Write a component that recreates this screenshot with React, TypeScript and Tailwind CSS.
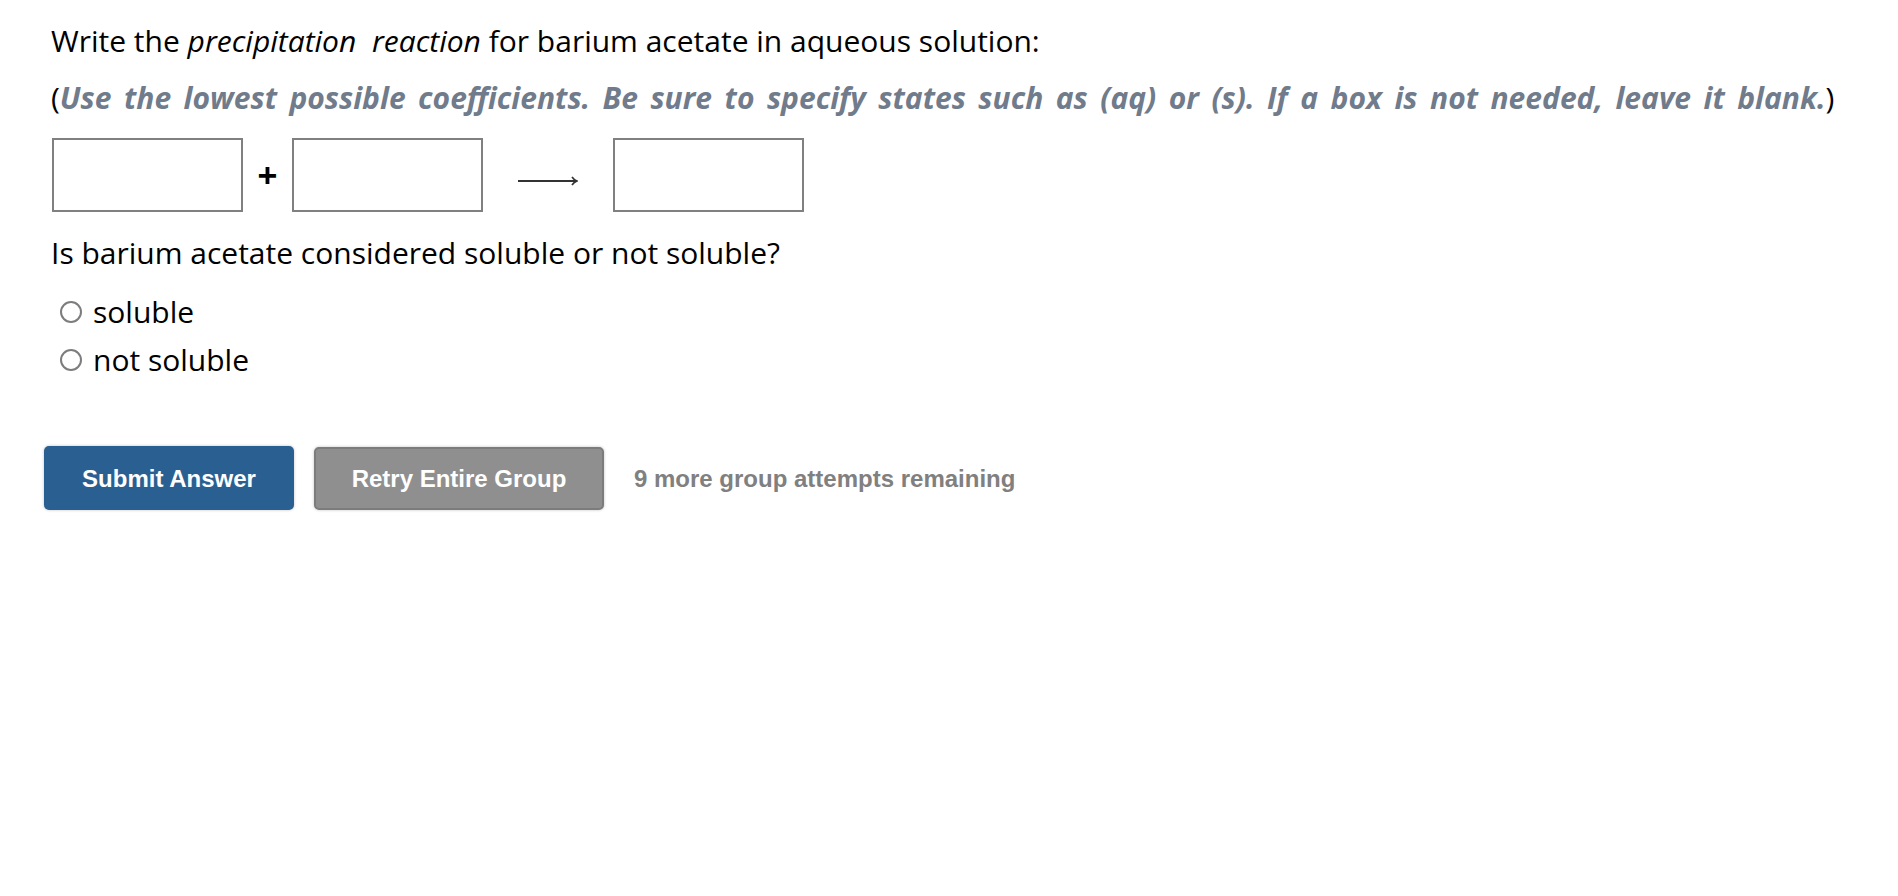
import React from "react";

const AnswerBox = () => (
    <input
        type="text"
        aria-label="answer"
        className="w-[191px] h-[74px] border-2 border-[#808080] bg-white outline-none"
    />
);

const Radio = ({ label }: { label: string }) => (
    <label className="flex items-center h-[41px]">
        <span className="w-[22px] h-[22px] rounded-full border-2 border-[#7d7d7d] bg-white ml-[9px] mr-[11px]" />
        <span>{label}</span>
    </label>
);

export default function App() {
    return (
        <div className="min-h-screen bg-white text-black font-['Open_Sans',sans-serif] text-[30px] leading-[41px] pt-[20px]">
            <div className="pl-[51px]">
                <p>
                    Write the <i>precipitation</i>&nbsp; <i>reaction</i> for barium acetate in aqueous solution:
                </p>
                <p className="mt-[16px] [word-spacing:4.7px]">
                    (<b className="italic text-[#707b8b]">Use the lowest possible coefficients. Be sure to specify states such as (aq) or (s). If a box is not needed, leave it blank.</b>)
                </p>
            </div>

            <div className="flex items-center mt-[20px] pl-[52px]">
                <AnswerBox />
                <span className="w-[49px] text-center font-['Liberation_Sans',sans-serif] font-bold text-[34px] leading-none">+</span>
                <AnswerBox />
                <svg className="mx-[35px] mt-[12px]" width="60" height="12" viewBox="0 0 60 12">
                    <line x1="0" y1="6" x2="58" y2="6" stroke="#333" strokeWidth="2" />
                    <path d="M54 2 Q56 5 59 6 Q56 7 54 10" fill="none" stroke="#333" strokeWidth="1.6" />
                </svg>
                <AnswerBox />
            </div>

            <div className="pl-[51px]">
                <p className="mt-[20px]">Is barium acetate considered soluble or not soluble?</p>
                <div className="mt-[18px] flex flex-col gap-[7px]">
                    <Radio label="soluble" />
                    <Radio label="not soluble" />
                </div>
            </div>

            <div className="flex items-center mt-[66px] pl-[44px] font-['Liberation_Sans',Arial,sans-serif] font-bold">
                <button className="w-[250px] h-[64px] rounded-[5px] bg-[#2a5f91] text-white text-[24px] shadow-[0_0_3px_rgba(0,0,0,0.25)]">
                    Submit Answer
                </button>
                <button className="ml-[20px] w-[290px] h-[63px] rounded-[5px] bg-[#8f8f8f] border-2 border-[#7c7c7c] text-white text-[24px] shadow-[0_0_3px_rgba(0,0,0,0.25)]">
                    Retry Entire Group
                </button>
                <span className="ml-[30px] text-[24px] text-[#808080]">9 more group attempts remaining</span>
            </div>
        </div>
    );
}
